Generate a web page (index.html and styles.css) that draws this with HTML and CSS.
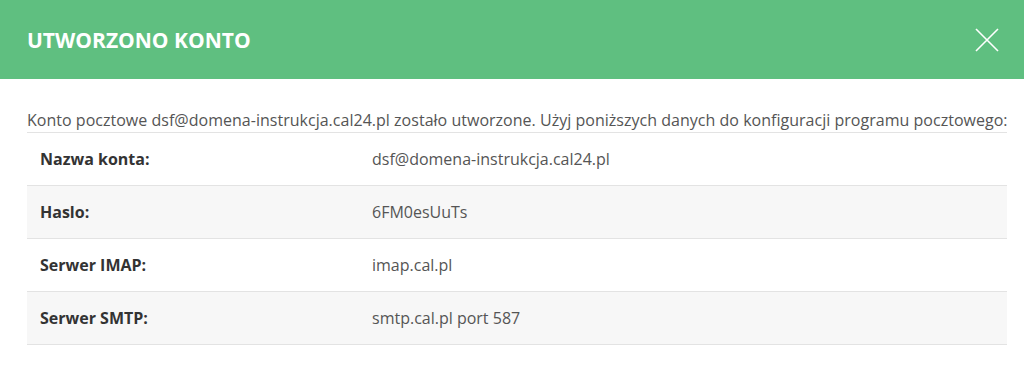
FILE: index.html
```html
<!DOCTYPE html>
<html lang="pl">

<head>
	<meta charset="UTF-8">
	<meta name="viewport" content="width=device-width, initial-scale=1.0">
	<title>Utworzono konto</title>
	<link rel="stylesheet" href="styles.css">
</head>

<body>
	<div class="modal">
		<div class="modal-header">
			<h3 class="modal-title">Utworzono konto</h3>
			<button class="close" type="button" aria-label="Zamknij">
				<svg width="24" height="24" viewBox="0 0 24 24">
					<path d="M1 1 L23 23 M23 1 L1 23" stroke="#fff" stroke-width="1.6" fill="none" />
				</svg>
			</button>
		</div>
		<div class="modal-body">
			<p class="info">Konto pocztowe dsf@domena-instrukcja.cal24.pl zostało utworzone. Użyj poniższych danych do konfiguracji programu pocztowego:</p>
			<table class="details">
				<tr>
					<th>Nazwa konta:</th>
					<td>dsf@domena-instrukcja.cal24.pl</td>
				</tr>
				<tr>
					<th>Haslo:</th>
					<td>6FM0esUuTs</td>
				</tr>
				<tr>
					<th>Serwer IMAP:</th>
					<td>imap.cal.pl</td>
				</tr>
				<tr>
					<th>Serwer SMTP:</th>
					<td>smtp.cal.pl port 587</td>
				</tr>
			</table>
		</div>
	</div>
</body>

</html>
```

FILE: styles.css
```css
body {
	font-family: "Open Sans", Arial, sans-serif;
	margin: 0;
	background-color: #fff;
	color: #555;
}

.modal-header {
	height: 79px;
	display: flex;
	align-items: center;
	justify-content: space-between;
	padding: 0 25px 0 27px;
	background-color: #5fbf80;
	box-sizing: border-box;
}

.modal-title {
	margin: 0;
	font-size: 21px;
	font-weight: 700;
	text-transform: uppercase;
	color: #fff;
}

.close {
	background: none;
	border: none;
	padding: 0;
	width: 24px;
	height: 24px;
	cursor: pointer;
}

.close svg {
	display: block;
}

.modal-body {
	padding: 29px 17px 0 27px;
}

.info {
	margin: 0;
	font-size: 16px;
	line-height: 24px;
	letter-spacing: 0.02px;
	white-space: nowrap;
}

.details {
	width: 100%;
	border-collapse: collapse;
	font-size: 16px;
	line-height: 24px;
}

.details th,
.details td {
	padding: 14px 13px;
	border-top: 1px solid #e3e3e3;
	text-align: left;
	vertical-align: top;
}

.details tr:last-child th,
.details tr:last-child td {
	border-bottom: 1px solid #e3e3e3;
}

.details th {
	width: 306px;
	font-weight: 700;
	color: #333;
}

.details tr:nth-child(even) {
	background-color: #f7f7f7;
}
```
